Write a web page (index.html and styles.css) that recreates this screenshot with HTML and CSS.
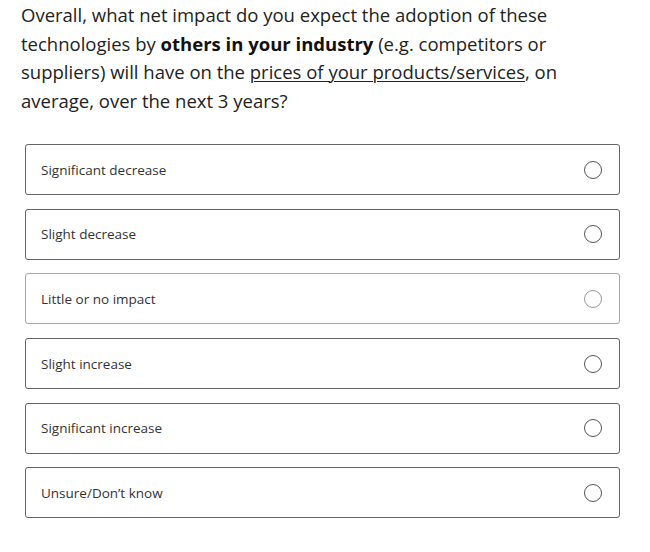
FILE: index.html
```html
<!DOCTYPE html>
<html>
<head>
<meta charset="utf-8">
<link rel="stylesheet" href="styles.css">
</head>
<body>
<div class="page">
  <p class="question">Overall, what net impact do you expect the adoption of these technologies by <strong>others in your industry</strong> (e.g. competitors or suppliers) will have on the <u>prices of your products/services</u>, on average, over the next 3 years?</p>
  <div class="options">
    <label class="option"><span class="label">Significant decrease</span><span class="radio"></span></label>
    <label class="option"><span class="label">Slight decrease</span><span class="radio"></span></label>
    <label class="option light"><span class="label">Little or no impact</span><span class="radio"></span></label>
    <label class="option"><span class="label">Slight increase</span><span class="radio"></span></label>
    <label class="option"><span class="label">Significant increase</span><span class="radio"></span></label>
    <label class="option"><span class="label">Unsure/Don’t know</span><span class="radio"></span></label>
  </div>
</div>
</body>
</html>
```

FILE: styles.css
```css
html, body {
  margin: 0;
  padding: 0;
  background: #ffffff;
}
.page {
  padding: 1px 0 0 21px;
  font-family: "Open Sans", "Noto Sans", sans-serif;
  color: #222222;
}
.question {
  margin: 0;
  width: 565px;
  font-size: 18.5px;
  line-height: 28.5px;
}
.question strong {
  font-weight: 700;
  color: #111111;
}
.question u {
  text-decoration-thickness: 1px;
  text-underline-offset: 2px;
}
.options {
  margin: 29px 0 0 4px;
  width: 595px;
  display: flex;
  flex-direction: column;
  gap: 13.7px;
}
.option {
  box-sizing: border-box;
  height: 51px;
  border: 1.5px solid #666666;
  border-radius: 3px;
  display: flex;
  align-items: center;
  justify-content: space-between;
  padding: 0 17px 0 15px;
  font-size: 13.5px;
  color: #333333;
}
.option.light {
  border-color: #a8a8a8;
}
.radio {
  box-sizing: border-box;
  width: 18px;
  height: 18px;
  border: 1.5px solid #555555;
  border-radius: 50%;
}
.option.light .radio {
  border-color: #999999;
}
```
